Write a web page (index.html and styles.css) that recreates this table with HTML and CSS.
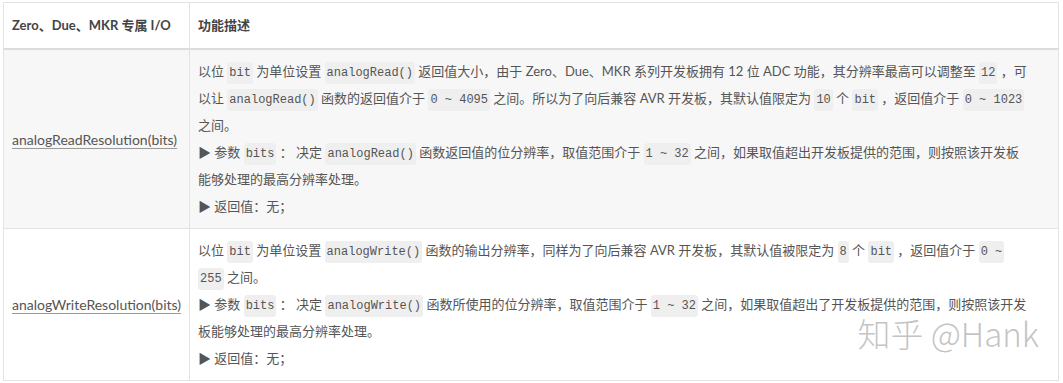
FILE: index.html
```html
<!DOCTYPE html>
<html lang="zh-CN">
<head>
<meta charset="utf-8">
<link rel="stylesheet" href="styles.css">
</head>
<body>
<div class="wrap">
<table class="io-table">
  <colgroup><col class="c1"><col class="c2"></colgroup>
  <thead>
    <tr><th>Zero、Due、MKR 专属 I/O</th><th>功能描述</th></tr>
  </thead>
  <tbody>
    <tr class="alt">
      <td class="fn"><a href="#">analogReadResolution(bits)</a></td>
      <td class="desc">以位 <code>bit</code> 为单位设置 <code>analogRead()</code> 返回值大小，由于 Zero、Due、MKR 系列开发板拥有 12 位 ADC 功能，其分辨率最高可以调整至 <code>12</code> ，可<br>以让 <code>analogRead()</code> 函数的返回值介于 <code>0 ~ 4095</code> 之间。所以为了向后兼容 AVR 开发板，其默认值限定为 <code>10</code> 个 <code>bit</code> ，返回值介于 <code>0 ~ 1023</code><br>之间。<br>▶ 参数 <code>bits</code> ： 决定 <code>analogRead()</code> 函数返回值的位分辨率，取值范围介于 <code>1 ~ 32</code> 之间，如果取值超出开发板提供的范围，则按照该开发板<br>能够处理的最高分辨率处理。<br>▶ 返回值：无；</td>
    </tr>
    <tr>
      <td class="fn"><a href="#">analogWriteResolution(bits)</a></td>
      <td class="desc">以位 <code>bit</code> 为单位设置 <code>analogWrite()</code> 函数的输出分辨率，同样为了向后兼容 AVR 开发板，其默认值被限定为 <code>8</code> 个 <code>bit</code> ，返回值介于 <code>0 ~</code><br><code>255</code> 之间。<br>▶ 参数 <code>bits</code> ： 决定 <code>analogWrite()</code> 函数所使用的位分辨率，取值范围介于 <code>1 ~ 32</code> 之间，如果取值超出了开发板提供的范围，则按照该开发<br>板能够处理的最高分辨率处理。<br>▶ 返回值：无；</td>
    </tr>
  </tbody>
</table>
<div class="watermark">知乎 @Hank</div>
</div>
</body>
</html>
```
FILE: styles.css
```css
html, body {
  margin: 0;
  padding: 0;
  background: #fff;
}
body {
  font-family: Lato, "Noto Sans CJK SC", sans-serif;
  color: #555;
}
.wrap {
  position: relative;
  padding: 2px 4px 0 3px;
}
.io-table {
  width: 1056px;
  border-collapse: collapse;
  table-layout: fixed;
  font-size: 13px;
  line-height: 27px;
}
.c1 { width: 186px; }
.io-table th,
.io-table td {
  border: 1px solid #e3e3e3;
  padding: 8px 8px;
  text-align: left;
}
.io-table th {
  padding: 9px 8px;
  font-weight: 700;
  color: #444;
  border-bottom: 2px solid #dcdcdc;
  background: #fff;
}
.io-table tr.alt td {
  background: #f7f7f7;
}
.fn {
  vertical-align: middle;
  font-size: 14px;
}
.fn a {
  color: #555;
  text-decoration: underline;
  text-decoration-color: #999;
  text-underline-offset: 3px;
}
.desc {
  vertical-align: top;
  color: #555;
}
code {
  font-family: "Liberation Mono", monospace;
  font-size: 12px;
  line-height: 1;
  background: #efefef;
  padding: 4px 2px;
  border-radius: 3px;
  color: #555;
}
.watermark {
  position: absolute;
  right: 24px;
  top: 309px;
  font-family: "Noto Sans CJK SC", sans-serif;
  font-size: 33px;
  font-weight: 300;
  color: rgba(170, 170, 170, 0.7);
  text-shadow: 1px 1px 0 rgba(255, 255, 255, 0.9);
  pointer-events: none;
  white-space: nowrap;
}
```
